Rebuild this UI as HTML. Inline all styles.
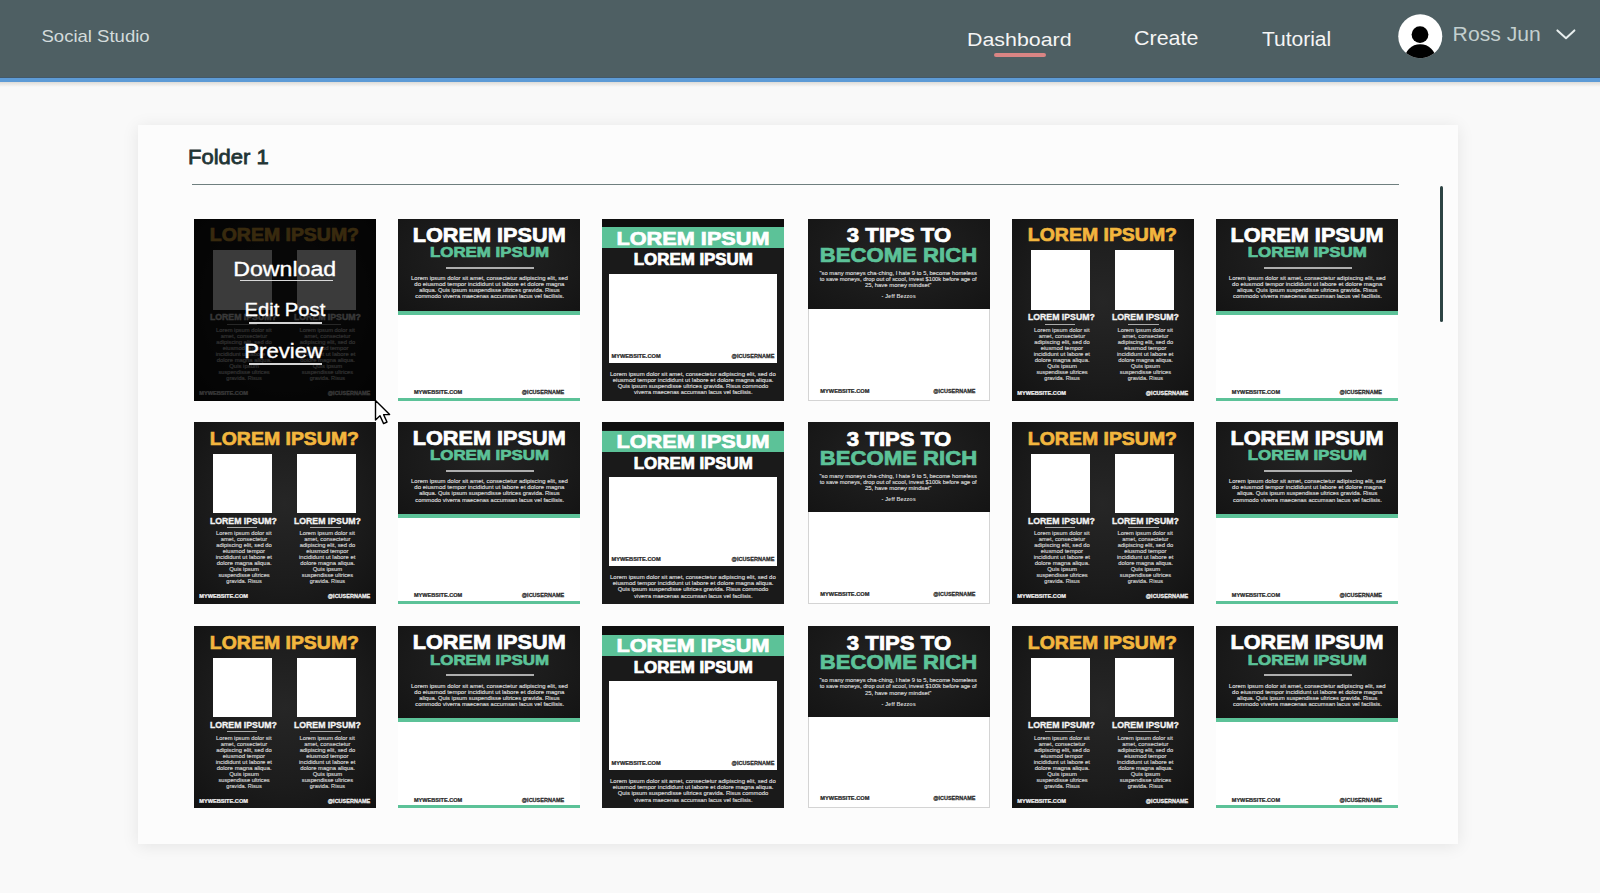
<!DOCTYPE html>
<html><head><meta charset="utf-8"><style>
html,body{margin:0;padding:0;}
body{width:1600px;height:893px;overflow:hidden;background:#f9f9f9;position:relative;font-family:"Liberation Sans",sans-serif;}
body div{position:absolute;}
.t{left:0;top:0;font-size:50px;line-height:50px;white-space:nowrap;transform-origin:0 0;}
</style></head><body>
<div style="left:0;top:0;width:1600px;height:78px;background:#4e5f63;"></div>
<div style="left:0;top:77px;width:1600px;height:1px;background:#43596a;"></div>
<div style="left:0;top:78px;width:1600px;height:4px;background:#5d9bd6;"></div>
<div style="left:0;top:82px;width:1600px;height:5px;background:linear-gradient(#dedcd8,#f9f9f9);"></div>
<div style="left:994px;top:52.8px;width:51.6px;height:4.2px;border-radius:2px;background:#da8584;"></div>
<svg style="position:absolute;left:1398px;top:14px" width="45" height="45" viewBox="0 0 45 45">
<defs><clipPath id="cc"><circle cx="22.25" cy="22.25" r="22"/></clipPath></defs>
<circle cx="22.25" cy="22.25" r="22" fill="#fff"/>
<g clip-path="url(#cc)"><circle cx="22" cy="20.6" r="8.4" fill="#000"/>
<ellipse cx="22.2" cy="45.5" rx="15.6" ry="15.3" fill="#000"/></g></svg>
<svg style="position:absolute;left:1555px;top:28px" width="22" height="13" viewBox="0 0 22 13">
<path d="M2.4 2.4 L11 10.2 L19.4 2.4" fill="none" stroke="#e8eeee" stroke-width="2" stroke-linecap="round" stroke-linejoin="round"/></svg>
<div style="left:138px;top:124.6px;width:1320px;height:719px;background:#fcfcfc;box-shadow:0 2px 16px rgba(0,0,0,0.085);"></div>
<div style="left:192px;top:183.5px;width:1207px;height:1.8px;background:#6f7f7f;"></div>
<div style="left:1439.6px;top:185.7px;width:3px;height:136.3px;border-radius:1.5px;background:#2d4444;"></div>
<div style="left:194.20px;top:218.60px;width:182.00px;height:182.00px;background:radial-gradient(ellipse at 50% 45%, #262626 0%, #1c1c1c 55%, #121212 100%);"></div>
<div class="t" style="font-weight:900;color:#f2b63e;transform:matrix(0.38911,0,0,0.37183,209.833,225.797);-webkit-text-stroke:1.883px #f2b63e;">LOREM IPSUM?</div>
<div style="left:212.80px;top:250.40px;width:59.40px;height:59.20px;background:#fff;"></div>
<div style="left:296.80px;top:250.40px;width:59.40px;height:59.20px;background:#fff;"></div>
<div class="t" style="font-weight:900;color:#f4f4f4;transform:matrix(0.17470,0,0,0.16338,209.876,313.456);-webkit-text-stroke:1.836px #f4f4f4;">LOREM IPSUM?</div>
<div class="t" style="font-weight:900;color:#f4f4f4;transform:matrix(0.17470,0,0,0.16338,293.876,313.456);-webkit-text-stroke:1.836px #f4f4f4;">LOREM IPSUM?</div>
<div style="left:226.60px;top:323.80px;width:30.00px;height:1.00px;background:#aaa;"></div>
<div style="left:310.00px;top:323.80px;width:31.00px;height:1.00px;background:#aaa;"></div>
<div class="t" style="font-weight:400;color:#d2d2d2;transform:matrix(0.11602,0,0,0.09863,216.036,328.008);-webkit-text-stroke:1.521px #d2d2d2;">Lorem ipsum dolor sit</div>
<div class="t" style="font-weight:400;color:#d2d2d2;transform:matrix(0.11653,0,0,0.11077,220.767,333.492);-webkit-text-stroke:1.354px #d2d2d2;">amet, consectetur</div>
<div class="t" style="font-weight:400;color:#d2d2d2;transform:matrix(0.11597,0,0,0.09863,216.268,340.008);-webkit-text-stroke:1.521px #d2d2d2;">adipiscing elit, sed do</div>
<div class="t" style="font-weight:400;color:#d2d2d2;transform:matrix(0.11803,0,0,0.09863,222.764,346.008);-webkit-text-stroke:1.521px #d2d2d2;">eiusmod tempor</div>
<div class="t" style="font-weight:400;color:#d2d2d2;transform:matrix(0.11854,0,0,0.09863,215.644,352.008);-webkit-text-stroke:1.521px #d2d2d2;">incididunt ut labore et</div>
<div class="t" style="font-weight:400;color:#d2d2d2;transform:matrix(0.11724,0,0,0.09863,216.766,358.008);-webkit-text-stroke:1.521px #d2d2d2;">dolore magna aliqua.</div>
<div class="t" style="font-weight:400;color:#d2d2d2;transform:matrix(0.11840,0,0,0.09863,229.263,364.008);-webkit-text-stroke:1.521px #d2d2d2;">Quis ipsum</div>
<div class="t" style="font-weight:400;color:#d2d2d2;transform:matrix(0.11391,0,0,0.09863,218.386,370.008);-webkit-text-stroke:1.521px #d2d2d2;">suspendisse ultrices</div>
<div class="t" style="font-weight:400;color:#d2d2d2;transform:matrix(0.11172,0,0,0.09863,226.277,376.008);-webkit-text-stroke:1.521px #d2d2d2;">gravida. Risus</div>
<div class="t" style="font-weight:400;color:#d2d2d2;transform:matrix(0.11602,0,0,0.09863,299.436,328.008);-webkit-text-stroke:1.521px #d2d2d2;">Lorem ipsum dolor sit</div>
<div class="t" style="font-weight:400;color:#d2d2d2;transform:matrix(0.11653,0,0,0.11077,304.167,333.492);-webkit-text-stroke:1.354px #d2d2d2;">amet, consectetur</div>
<div class="t" style="font-weight:400;color:#d2d2d2;transform:matrix(0.11597,0,0,0.09863,299.668,340.008);-webkit-text-stroke:1.521px #d2d2d2;">adipiscing elit, sed do</div>
<div class="t" style="font-weight:400;color:#d2d2d2;transform:matrix(0.11803,0,0,0.09863,306.164,346.008);-webkit-text-stroke:1.521px #d2d2d2;">eiusmod tempor</div>
<div class="t" style="font-weight:400;color:#d2d2d2;transform:matrix(0.11854,0,0,0.09863,299.044,352.008);-webkit-text-stroke:1.521px #d2d2d2;">incididunt ut labore et</div>
<div class="t" style="font-weight:400;color:#d2d2d2;transform:matrix(0.11724,0,0,0.09863,300.166,358.008);-webkit-text-stroke:1.521px #d2d2d2;">dolore magna aliqua.</div>
<div class="t" style="font-weight:400;color:#d2d2d2;transform:matrix(0.11840,0,0,0.09863,312.663,364.008);-webkit-text-stroke:1.521px #d2d2d2;">Quis ipsum</div>
<div class="t" style="font-weight:400;color:#d2d2d2;transform:matrix(0.11391,0,0,0.09863,301.786,370.008);-webkit-text-stroke:1.521px #d2d2d2;">suspendisse ultrices</div>
<div class="t" style="font-weight:400;color:#d2d2d2;transform:matrix(0.11172,0,0,0.09863,309.677,376.008);-webkit-text-stroke:1.521px #d2d2d2;">gravida. Risus</div>
<div class="t" style="font-weight:700;color:#f0f0f0;transform:matrix(0.11237,0,0,0.10857,199.263,390.686);-webkit-text-stroke:2.303px #f0f0f0;">MYWEBSITE.COM</div>
<div class="t" style="font-weight:700;color:#f0f0f0;transform:matrix(0.11037,0,0,0.10704,327.724,390.751);-webkit-text-stroke:2.336px #f0f0f0;">@ICUSERNAME</div>
<div style="left:398.20px;top:218.60px;width:182.00px;height:182.00px;background:#fff;"></div>
<div style="left:398.20px;top:218.60px;width:182.00px;height:92.00px;background:radial-gradient(ellipse at 50% 40%, #232323 0%, #1a1a1a 60%, #141414 100%);"></div>
<div style="left:398.20px;top:310.80px;width:182.00px;height:3.80px;background:#5cc298;"></div>
<div class="t" style="font-weight:900;color:#fff;transform:matrix(0.43389,0,0,0.39429,412.698,225.243);-webkit-text-stroke:1.775px #fff;">LOREM IPSUM</div>
<div class="t" style="font-weight:900;color:#5cc298;transform:matrix(0.33753,0,0,0.30000,429.987,244.650);-webkit-text-stroke:2.333px #5cc298;">LOREM IPSUM</div>
<div style="left:446.20px;top:266.90px;width:88.00px;height:1.80px;background:#aeaeae;"></div>
<div class="t" style="font-weight:400;color:#d8d8d8;transform:matrix(0.11955,0,0,0.09863,411.022,276.008);-webkit-text-stroke:1.521px #d8d8d8;">Lorem ipsum dolor sit amet, consectetur adipiscing elit, sed</div>
<div class="t" style="font-weight:400;color:#d8d8d8;transform:matrix(0.12145,0,0,0.09863,414.257,282.058);-webkit-text-stroke:1.521px #d8d8d8;">do eiusmod tempor incididunt ut labore et dolore magna</div>
<div class="t" style="font-weight:400;color:#d8d8d8;transform:matrix(0.11641,0,0,0.09863,419.267,288.108);-webkit-text-stroke:1.521px #d8d8d8;">aliqua. Quis ipsum suspendisse ultrices gravida. Risus</div>
<div class="t" style="font-weight:400;color:#d8d8d8;transform:matrix(0.11739,0,0,0.09863,415.265,294.158);-webkit-text-stroke:1.521px #d8d8d8;">commodo viverra maecenas accumsan lacus vel facilisis.</div>
<div class="t" style="font-weight:700;color:#2a2a2a;transform:matrix(0.11143,0,0,0.10857,413.966,389.686);-webkit-text-stroke:2.303px #2a2a2a;">MYWEBSITE.COM</div>
<div class="t" style="font-weight:700;color:#2a2a2a;transform:matrix(0.11037,0,0,0.10704,521.724,389.751);-webkit-text-stroke:2.336px #2a2a2a;">@ICUSERNAME</div>
<div style="left:398.20px;top:397.80px;width:182.00px;height:3.20px;background:#5cc298;"></div>
<div style="left:602.00px;top:218.60px;width:182.00px;height:182.00px;background:#1a1a1a;"></div>
<div style="left:602.00px;top:218.60px;width:182.00px;height:8.70px;background:#0f0f0f;"></div>
<div style="left:602.00px;top:227.30px;width:182.00px;height:21.20px;background:#5cc298;"></div>
<div class="t" style="font-weight:900;color:#fff;transform:matrix(0.43389,0,0,0.38286,616.498,228.729);-webkit-text-stroke:1.828px #fff;">LOREM IPSUM</div>
<div class="t" style="font-weight:900;color:#fff;transform:matrix(0.33753,0,0,0.31429,633.787,252.243);-webkit-text-stroke:2.227px #fff;">LOREM IPSUM</div>
<div style="left:609.30px;top:273.90px;width:168.00px;height:89.00px;background:#fff;"></div>
<div class="t" style="font-weight:700;color:#2a2a2a;transform:matrix(0.11354,0,0,0.10857,611.459,353.186);-webkit-text-stroke:2.303px #2a2a2a;">MYWEBSITE.COM</div>
<div class="t" style="font-weight:700;color:#2a2a2a;transform:matrix(0.11142,0,0,0.10704,731.521,353.251);-webkit-text-stroke:2.336px #2a2a2a;">@ICUSERNAME</div>
<div class="t" style="font-weight:400;color:#d8d8d8;transform:matrix(0.11996,0,0,0.09863,610.020,371.408);-webkit-text-stroke:1.521px #d8d8d8;">Lorem ipsum dolor sit amet, consectetur adipiscing elit, sed do</div>
<div class="t" style="font-weight:400;color:#d8d8d8;transform:matrix(0.12101,0,0,0.09863,612.758,377.658);-webkit-text-stroke:1.521px #d8d8d8;">eiusmod tempor incididunt ut labore et dolore magna aliqua.</div>
<div class="t" style="font-weight:400;color:#d8d8d8;transform:matrix(0.11769,0,0,0.09863,617.765,383.908);-webkit-text-stroke:1.521px #d8d8d8;">Quis ipsum suspendisse ultrices gravida. Risus commodo</div>
<div class="t" style="font-weight:400;color:#d8d8d8;transform:matrix(0.11464,0,0,0.09863,634.000,390.158);-webkit-text-stroke:1.521px #d8d8d8;">viverra maecenas accumsan lacus vel facilisis.</div>
<div style="left:807.70px;top:218.60px;width:182.00px;height:182.00px;background:#fff;border:1px solid #d4d4d4;box-sizing:border-box;"></div>
<div style="left:807.70px;top:218.60px;width:182.00px;height:90.50px;background:radial-gradient(ellipse at 50% 40%, #242424 0%, #1a1a1a 60%, #141414 100%);"></div>
<div class="t" style="font-weight:900;color:#fff;transform:matrix(0.44370,0,0,0.39714,846.856,225.721);-webkit-text-stroke:1.763px #fff;">3 TIPS TO</div>
<div class="t" style="font-weight:900;color:#5cc298;transform:matrix(0.44240,0,0,0.39714,819.873,245.121);-webkit-text-stroke:1.763px #5cc298;">BECOME RICH</div>
<div class="t" style="font-weight:400;color:#d8d8d8;transform:matrix(0.11644,0,0,0.09863,819.467,270.408);-webkit-text-stroke:1.521px #d8d8d8;">"so many moneys cha-ching, I hate 9 to 5, become homeless</div>
<div class="t" style="font-weight:400;color:#d8d8d8;transform:matrix(0.11507,0,0,0.09730,819.642,276.765);-webkit-text-stroke:1.542px #d8d8d8;">to save moneys, drop out of scool, invest $100k before age of</div>
<div class="t" style="font-weight:400;color:#d8d8d8;transform:matrix(0.11823,0,0,0.09863,864.904,283.008);-webkit-text-stroke:1.521px #d8d8d8;">25, have money mindset"</div>
<div class="t" style="font-weight:700;color:#cfcfcf;transform:matrix(0.11247,0,0,0.09863,881.531,294.008);">- Jeff Bezzos</div>
<div class="t" style="font-weight:700;color:#2a2a2a;transform:matrix(0.11354,0,0,0.10857,820.259,388.486);-webkit-text-stroke:2.303px #2a2a2a;">MYWEBSITE.COM</div>
<div class="t" style="font-weight:700;color:#2a2a2a;transform:matrix(0.10984,0,0,0.10704,933.125,388.551);-webkit-text-stroke:2.336px #2a2a2a;">@ICUSERNAME</div>
<div style="left:1012.20px;top:218.60px;width:182.00px;height:182.00px;background:radial-gradient(ellipse at 50% 45%, #262626 0%, #1c1c1c 55%, #121212 100%);"></div>
<div class="t" style="font-weight:900;color:#f2b63e;transform:matrix(0.38911,0,0,0.37183,1027.833,225.797);-webkit-text-stroke:1.883px #f2b63e;">LOREM IPSUM?</div>
<div style="left:1030.80px;top:250.40px;width:59.40px;height:59.20px;background:#fff;"></div>
<div style="left:1114.80px;top:250.40px;width:59.40px;height:59.20px;background:#fff;"></div>
<div class="t" style="font-weight:900;color:#f4f4f4;transform:matrix(0.17470,0,0,0.16338,1027.876,313.456);-webkit-text-stroke:1.836px #f4f4f4;">LOREM IPSUM?</div>
<div class="t" style="font-weight:900;color:#f4f4f4;transform:matrix(0.17470,0,0,0.16338,1111.876,313.456);-webkit-text-stroke:1.836px #f4f4f4;">LOREM IPSUM?</div>
<div style="left:1044.60px;top:323.80px;width:30.00px;height:1.00px;background:#aaa;"></div>
<div style="left:1128.00px;top:323.80px;width:31.00px;height:1.00px;background:#aaa;"></div>
<div class="t" style="font-weight:400;color:#d2d2d2;transform:matrix(0.11602,0,0,0.09863,1034.036,328.008);-webkit-text-stroke:1.521px #d2d2d2;">Lorem ipsum dolor sit</div>
<div class="t" style="font-weight:400;color:#d2d2d2;transform:matrix(0.11653,0,0,0.11077,1038.767,333.492);-webkit-text-stroke:1.354px #d2d2d2;">amet, consectetur</div>
<div class="t" style="font-weight:400;color:#d2d2d2;transform:matrix(0.11597,0,0,0.09863,1034.268,340.008);-webkit-text-stroke:1.521px #d2d2d2;">adipiscing elit, sed do</div>
<div class="t" style="font-weight:400;color:#d2d2d2;transform:matrix(0.11803,0,0,0.09863,1040.764,346.008);-webkit-text-stroke:1.521px #d2d2d2;">eiusmod tempor</div>
<div class="t" style="font-weight:400;color:#d2d2d2;transform:matrix(0.11854,0,0,0.09863,1033.644,352.008);-webkit-text-stroke:1.521px #d2d2d2;">incididunt ut labore et</div>
<div class="t" style="font-weight:400;color:#d2d2d2;transform:matrix(0.11724,0,0,0.09863,1034.766,358.008);-webkit-text-stroke:1.521px #d2d2d2;">dolore magna aliqua.</div>
<div class="t" style="font-weight:400;color:#d2d2d2;transform:matrix(0.11840,0,0,0.09863,1047.263,364.008);-webkit-text-stroke:1.521px #d2d2d2;">Quis ipsum</div>
<div class="t" style="font-weight:400;color:#d2d2d2;transform:matrix(0.11391,0,0,0.09863,1036.386,370.008);-webkit-text-stroke:1.521px #d2d2d2;">suspendisse ultrices</div>
<div class="t" style="font-weight:400;color:#d2d2d2;transform:matrix(0.11172,0,0,0.09863,1044.277,376.008);-webkit-text-stroke:1.521px #d2d2d2;">gravida. Risus</div>
<div class="t" style="font-weight:400;color:#d2d2d2;transform:matrix(0.11602,0,0,0.09863,1117.436,328.008);-webkit-text-stroke:1.521px #d2d2d2;">Lorem ipsum dolor sit</div>
<div class="t" style="font-weight:400;color:#d2d2d2;transform:matrix(0.11653,0,0,0.11077,1122.167,333.492);-webkit-text-stroke:1.354px #d2d2d2;">amet, consectetur</div>
<div class="t" style="font-weight:400;color:#d2d2d2;transform:matrix(0.11597,0,0,0.09863,1117.668,340.008);-webkit-text-stroke:1.521px #d2d2d2;">adipiscing elit, sed do</div>
<div class="t" style="font-weight:400;color:#d2d2d2;transform:matrix(0.11803,0,0,0.09863,1124.164,346.008);-webkit-text-stroke:1.521px #d2d2d2;">eiusmod tempor</div>
<div class="t" style="font-weight:400;color:#d2d2d2;transform:matrix(0.11854,0,0,0.09863,1117.044,352.008);-webkit-text-stroke:1.521px #d2d2d2;">incididunt ut labore et</div>
<div class="t" style="font-weight:400;color:#d2d2d2;transform:matrix(0.11724,0,0,0.09863,1118.166,358.008);-webkit-text-stroke:1.521px #d2d2d2;">dolore magna aliqua.</div>
<div class="t" style="font-weight:400;color:#d2d2d2;transform:matrix(0.11840,0,0,0.09863,1130.663,364.008);-webkit-text-stroke:1.521px #d2d2d2;">Quis ipsum</div>
<div class="t" style="font-weight:400;color:#d2d2d2;transform:matrix(0.11391,0,0,0.09863,1119.786,370.008);-webkit-text-stroke:1.521px #d2d2d2;">suspendisse ultrices</div>
<div class="t" style="font-weight:400;color:#d2d2d2;transform:matrix(0.11172,0,0,0.09863,1127.677,376.008);-webkit-text-stroke:1.521px #d2d2d2;">gravida. Risus</div>
<div class="t" style="font-weight:700;color:#f0f0f0;transform:matrix(0.11237,0,0,0.10857,1017.263,390.686);-webkit-text-stroke:2.303px #f0f0f0;">MYWEBSITE.COM</div>
<div class="t" style="font-weight:700;color:#f0f0f0;transform:matrix(0.11037,0,0,0.10704,1145.724,390.751);-webkit-text-stroke:2.336px #f0f0f0;">@ICUSERNAME</div>
<div style="left:1216.00px;top:218.60px;width:182.00px;height:182.00px;background:#fff;"></div>
<div style="left:1216.00px;top:218.60px;width:182.00px;height:92.00px;background:radial-gradient(ellipse at 50% 40%, #232323 0%, #1a1a1a 60%, #141414 100%);"></div>
<div style="left:1216.00px;top:310.80px;width:182.00px;height:3.80px;background:#5cc298;"></div>
<div class="t" style="font-weight:900;color:#fff;transform:matrix(0.43389,0,0,0.39429,1230.498,225.243);-webkit-text-stroke:1.775px #fff;">LOREM IPSUM</div>
<div class="t" style="font-weight:900;color:#5cc298;transform:matrix(0.33753,0,0,0.30000,1247.787,244.650);-webkit-text-stroke:2.333px #5cc298;">LOREM IPSUM</div>
<div style="left:1264.00px;top:266.90px;width:88.00px;height:1.80px;background:#aeaeae;"></div>
<div class="t" style="font-weight:400;color:#d8d8d8;transform:matrix(0.11955,0,0,0.09863,1228.822,276.008);-webkit-text-stroke:1.521px #d8d8d8;">Lorem ipsum dolor sit amet, consectetur adipiscing elit, sed</div>
<div class="t" style="font-weight:400;color:#d8d8d8;transform:matrix(0.12145,0,0,0.09863,1232.057,282.058);-webkit-text-stroke:1.521px #d8d8d8;">do eiusmod tempor incididunt ut labore et dolore magna</div>
<div class="t" style="font-weight:400;color:#d8d8d8;transform:matrix(0.11641,0,0,0.09863,1237.067,288.108);-webkit-text-stroke:1.521px #d8d8d8;">aliqua. Quis ipsum suspendisse ultrices gravida. Risus</div>
<div class="t" style="font-weight:400;color:#d8d8d8;transform:matrix(0.11739,0,0,0.09863,1233.065,294.158);-webkit-text-stroke:1.521px #d8d8d8;">commodo viverra maecenas accumsan lacus vel facilisis.</div>
<div class="t" style="font-weight:700;color:#2a2a2a;transform:matrix(0.11143,0,0,0.10857,1231.766,389.686);-webkit-text-stroke:2.303px #2a2a2a;">MYWEBSITE.COM</div>
<div class="t" style="font-weight:700;color:#2a2a2a;transform:matrix(0.11037,0,0,0.10704,1339.524,389.751);-webkit-text-stroke:2.336px #2a2a2a;">@ICUSERNAME</div>
<div style="left:1216.00px;top:397.80px;width:182.00px;height:3.20px;background:#5cc298;"></div>
<div style="left:194.20px;top:421.80px;width:182.00px;height:182.00px;background:radial-gradient(ellipse at 50% 45%, #262626 0%, #1c1c1c 55%, #121212 100%);"></div>
<div class="t" style="font-weight:900;color:#f2b63e;transform:matrix(0.38911,0,0,0.37183,209.833,428.997);-webkit-text-stroke:1.883px #f2b63e;">LOREM IPSUM?</div>
<div style="left:212.80px;top:453.60px;width:59.40px;height:59.20px;background:#fff;"></div>
<div style="left:296.80px;top:453.60px;width:59.40px;height:59.20px;background:#fff;"></div>
<div class="t" style="font-weight:900;color:#f4f4f4;transform:matrix(0.17470,0,0,0.16338,209.876,516.656);-webkit-text-stroke:1.836px #f4f4f4;">LOREM IPSUM?</div>
<div class="t" style="font-weight:900;color:#f4f4f4;transform:matrix(0.17470,0,0,0.16338,293.876,516.656);-webkit-text-stroke:1.836px #f4f4f4;">LOREM IPSUM?</div>
<div style="left:226.60px;top:527.00px;width:30.00px;height:1.00px;background:#aaa;"></div>
<div style="left:310.00px;top:527.00px;width:31.00px;height:1.00px;background:#aaa;"></div>
<div class="t" style="font-weight:400;color:#d2d2d2;transform:matrix(0.11602,0,0,0.09863,216.036,531.208);-webkit-text-stroke:1.521px #d2d2d2;">Lorem ipsum dolor sit</div>
<div class="t" style="font-weight:400;color:#d2d2d2;transform:matrix(0.11653,0,0,0.11077,220.767,536.692);-webkit-text-stroke:1.354px #d2d2d2;">amet, consectetur</div>
<div class="t" style="font-weight:400;color:#d2d2d2;transform:matrix(0.11597,0,0,0.09863,216.268,543.208);-webkit-text-stroke:1.521px #d2d2d2;">adipiscing elit, sed do</div>
<div class="t" style="font-weight:400;color:#d2d2d2;transform:matrix(0.11803,0,0,0.09863,222.764,549.208);-webkit-text-stroke:1.521px #d2d2d2;">eiusmod tempor</div>
<div class="t" style="font-weight:400;color:#d2d2d2;transform:matrix(0.11854,0,0,0.09863,215.644,555.208);-webkit-text-stroke:1.521px #d2d2d2;">incididunt ut labore et</div>
<div class="t" style="font-weight:400;color:#d2d2d2;transform:matrix(0.11724,0,0,0.09863,216.766,561.208);-webkit-text-stroke:1.521px #d2d2d2;">dolore magna aliqua.</div>
<div class="t" style="font-weight:400;color:#d2d2d2;transform:matrix(0.11840,0,0,0.09863,229.263,567.208);-webkit-text-stroke:1.521px #d2d2d2;">Quis ipsum</div>
<div class="t" style="font-weight:400;color:#d2d2d2;transform:matrix(0.11391,0,0,0.09863,218.386,573.208);-webkit-text-stroke:1.521px #d2d2d2;">suspendisse ultrices</div>
<div class="t" style="font-weight:400;color:#d2d2d2;transform:matrix(0.11172,0,0,0.09863,226.277,579.208);-webkit-text-stroke:1.521px #d2d2d2;">gravida. Risus</div>
<div class="t" style="font-weight:400;color:#d2d2d2;transform:matrix(0.11602,0,0,0.09863,299.436,531.208);-webkit-text-stroke:1.521px #d2d2d2;">Lorem ipsum dolor sit</div>
<div class="t" style="font-weight:400;color:#d2d2d2;transform:matrix(0.11653,0,0,0.11077,304.167,536.692);-webkit-text-stroke:1.354px #d2d2d2;">amet, consectetur</div>
<div class="t" style="font-weight:400;color:#d2d2d2;transform:matrix(0.11597,0,0,0.09863,299.668,543.208);-webkit-text-stroke:1.521px #d2d2d2;">adipiscing elit, sed do</div>
<div class="t" style="font-weight:400;color:#d2d2d2;transform:matrix(0.11803,0,0,0.09863,306.164,549.208);-webkit-text-stroke:1.521px #d2d2d2;">eiusmod tempor</div>
<div class="t" style="font-weight:400;color:#d2d2d2;transform:matrix(0.11854,0,0,0.09863,299.044,555.208);-webkit-text-stroke:1.521px #d2d2d2;">incididunt ut labore et</div>
<div class="t" style="font-weight:400;color:#d2d2d2;transform:matrix(0.11724,0,0,0.09863,300.166,561.208);-webkit-text-stroke:1.521px #d2d2d2;">dolore magna aliqua.</div>
<div class="t" style="font-weight:400;color:#d2d2d2;transform:matrix(0.11840,0,0,0.09863,312.663,567.208);-webkit-text-stroke:1.521px #d2d2d2;">Quis ipsum</div>
<div class="t" style="font-weight:400;color:#d2d2d2;transform:matrix(0.11391,0,0,0.09863,301.786,573.208);-webkit-text-stroke:1.521px #d2d2d2;">suspendisse ultrices</div>
<div class="t" style="font-weight:400;color:#d2d2d2;transform:matrix(0.11172,0,0,0.09863,309.677,579.208);-webkit-text-stroke:1.521px #d2d2d2;">gravida. Risus</div>
<div class="t" style="font-weight:700;color:#f0f0f0;transform:matrix(0.11237,0,0,0.10857,199.263,593.886);-webkit-text-stroke:2.303px #f0f0f0;">MYWEBSITE.COM</div>
<div class="t" style="font-weight:700;color:#f0f0f0;transform:matrix(0.11037,0,0,0.10704,327.724,593.951);-webkit-text-stroke:2.336px #f0f0f0;">@ICUSERNAME</div>
<div style="left:398.20px;top:421.80px;width:182.00px;height:182.00px;background:#fff;"></div>
<div style="left:398.20px;top:421.80px;width:182.00px;height:92.00px;background:radial-gradient(ellipse at 50% 40%, #232323 0%, #1a1a1a 60%, #141414 100%);"></div>
<div style="left:398.20px;top:514.00px;width:182.00px;height:3.80px;background:#5cc298;"></div>
<div class="t" style="font-weight:900;color:#fff;transform:matrix(0.43389,0,0,0.39429,412.698,428.443);-webkit-text-stroke:1.775px #fff;">LOREM IPSUM</div>
<div class="t" style="font-weight:900;color:#5cc298;transform:matrix(0.33753,0,0,0.30000,429.987,447.850);-webkit-text-stroke:2.333px #5cc298;">LOREM IPSUM</div>
<div style="left:446.20px;top:470.10px;width:88.00px;height:1.80px;background:#aeaeae;"></div>
<div class="t" style="font-weight:400;color:#d8d8d8;transform:matrix(0.11955,0,0,0.09863,411.022,479.208);-webkit-text-stroke:1.521px #d8d8d8;">Lorem ipsum dolor sit amet, consectetur adipiscing elit, sed</div>
<div class="t" style="font-weight:400;color:#d8d8d8;transform:matrix(0.12145,0,0,0.09863,414.257,485.258);-webkit-text-stroke:1.521px #d8d8d8;">do eiusmod tempor incididunt ut labore et dolore magna</div>
<div class="t" style="font-weight:400;color:#d8d8d8;transform:matrix(0.11641,0,0,0.09863,419.267,491.308);-webkit-text-stroke:1.521px #d8d8d8;">aliqua. Quis ipsum suspendisse ultrices gravida. Risus</div>
<div class="t" style="font-weight:400;color:#d8d8d8;transform:matrix(0.11739,0,0,0.09863,415.265,497.358);-webkit-text-stroke:1.521px #d8d8d8;">commodo viverra maecenas accumsan lacus vel facilisis.</div>
<div class="t" style="font-weight:700;color:#2a2a2a;transform:matrix(0.11143,0,0,0.10857,413.966,592.886);-webkit-text-stroke:2.303px #2a2a2a;">MYWEBSITE.COM</div>
<div class="t" style="font-weight:700;color:#2a2a2a;transform:matrix(0.11037,0,0,0.10704,521.724,592.951);-webkit-text-stroke:2.336px #2a2a2a;">@ICUSERNAME</div>
<div style="left:398.20px;top:601.00px;width:182.00px;height:3.20px;background:#5cc298;"></div>
<div style="left:602.00px;top:421.80px;width:182.00px;height:182.00px;background:#1a1a1a;"></div>
<div style="left:602.00px;top:421.80px;width:182.00px;height:8.70px;background:#0f0f0f;"></div>
<div style="left:602.00px;top:430.50px;width:182.00px;height:21.20px;background:#5cc298;"></div>
<div class="t" style="font-weight:900;color:#fff;transform:matrix(0.43389,0,0,0.38286,616.498,431.929);-webkit-text-stroke:1.828px #fff;">LOREM IPSUM</div>
<div class="t" style="font-weight:900;color:#fff;transform:matrix(0.33753,0,0,0.31429,633.787,455.443);-webkit-text-stroke:2.227px #fff;">LOREM IPSUM</div>
<div style="left:609.30px;top:477.10px;width:168.00px;height:89.00px;background:#fff;"></div>
<div class="t" style="font-weight:700;color:#2a2a2a;transform:matrix(0.11354,0,0,0.10857,611.459,556.386);-webkit-text-stroke:2.303px #2a2a2a;">MYWEBSITE.COM</div>
<div class="t" style="font-weight:700;color:#2a2a2a;transform:matrix(0.11142,0,0,0.10704,731.521,556.451);-webkit-text-stroke:2.336px #2a2a2a;">@ICUSERNAME</div>
<div class="t" style="font-weight:400;color:#d8d8d8;transform:matrix(0.11996,0,0,0.09863,610.020,574.608);-webkit-text-stroke:1.521px #d8d8d8;">Lorem ipsum dolor sit amet, consectetur adipiscing elit, sed do</div>
<div class="t" style="font-weight:400;color:#d8d8d8;transform:matrix(0.12101,0,0,0.09863,612.758,580.858);-webkit-text-stroke:1.521px #d8d8d8;">eiusmod tempor incididunt ut labore et dolore magna aliqua.</div>
<div class="t" style="font-weight:400;color:#d8d8d8;transform:matrix(0.11769,0,0,0.09863,617.765,587.108);-webkit-text-stroke:1.521px #d8d8d8;">Quis ipsum suspendisse ultrices gravida. Risus commodo</div>
<div class="t" style="font-weight:400;color:#d8d8d8;transform:matrix(0.11464,0,0,0.09863,634.000,593.358);-webkit-text-stroke:1.521px #d8d8d8;">viverra maecenas accumsan lacus vel facilisis.</div>
<div style="left:807.70px;top:421.80px;width:182.00px;height:182.00px;background:#fff;border:1px solid #d4d4d4;box-sizing:border-box;"></div>
<div style="left:807.70px;top:421.80px;width:182.00px;height:90.50px;background:radial-gradient(ellipse at 50% 40%, #242424 0%, #1a1a1a 60%, #141414 100%);"></div>
<div class="t" style="font-weight:900;color:#fff;transform:matrix(0.44370,0,0,0.39714,846.856,428.921);-webkit-text-stroke:1.763px #fff;">3 TIPS TO</div>
<div class="t" style="font-weight:900;color:#5cc298;transform:matrix(0.44240,0,0,0.39714,819.873,448.321);-webkit-text-stroke:1.763px #5cc298;">BECOME RICH</div>
<div class="t" style="font-weight:400;color:#d8d8d8;transform:matrix(0.11644,0,0,0.09863,819.467,473.608);-webkit-text-stroke:1.521px #d8d8d8;">"so many moneys cha-ching, I hate 9 to 5, become homeless</div>
<div class="t" style="font-weight:400;color:#d8d8d8;transform:matrix(0.11507,0,0,0.09730,819.642,479.965);-webkit-text-stroke:1.542px #d8d8d8;">to save moneys, drop out of scool, invest $100k before age of</div>
<div class="t" style="font-weight:400;color:#d8d8d8;transform:matrix(0.11823,0,0,0.09863,864.904,486.208);-webkit-text-stroke:1.521px #d8d8d8;">25, have money mindset"</div>
<div class="t" style="font-weight:700;color:#cfcfcf;transform:matrix(0.11247,0,0,0.09863,881.531,497.208);">- Jeff Bezzos</div>
<div class="t" style="font-weight:700;color:#2a2a2a;transform:matrix(0.11354,0,0,0.10857,820.259,591.686);-webkit-text-stroke:2.303px #2a2a2a;">MYWEBSITE.COM</div>
<div class="t" style="font-weight:700;color:#2a2a2a;transform:matrix(0.10984,0,0,0.10704,933.125,591.751);-webkit-text-stroke:2.336px #2a2a2a;">@ICUSERNAME</div>
<div style="left:1012.20px;top:421.80px;width:182.00px;height:182.00px;background:radial-gradient(ellipse at 50% 45%, #262626 0%, #1c1c1c 55%, #121212 100%);"></div>
<div class="t" style="font-weight:900;color:#f2b63e;transform:matrix(0.38911,0,0,0.37183,1027.833,428.997);-webkit-text-stroke:1.883px #f2b63e;">LOREM IPSUM?</div>
<div style="left:1030.80px;top:453.60px;width:59.40px;height:59.20px;background:#fff;"></div>
<div style="left:1114.80px;top:453.60px;width:59.40px;height:59.20px;background:#fff;"></div>
<div class="t" style="font-weight:900;color:#f4f4f4;transform:matrix(0.17470,0,0,0.16338,1027.876,516.656);-webkit-text-stroke:1.836px #f4f4f4;">LOREM IPSUM?</div>
<div class="t" style="font-weight:900;color:#f4f4f4;transform:matrix(0.17470,0,0,0.16338,1111.876,516.656);-webkit-text-stroke:1.836px #f4f4f4;">LOREM IPSUM?</div>
<div style="left:1044.60px;top:527.00px;width:30.00px;height:1.00px;background:#aaa;"></div>
<div style="left:1128.00px;top:527.00px;width:31.00px;height:1.00px;background:#aaa;"></div>
<div class="t" style="font-weight:400;color:#d2d2d2;transform:matrix(0.11602,0,0,0.09863,1034.036,531.208);-webkit-text-stroke:1.521px #d2d2d2;">Lorem ipsum dolor sit</div>
<div class="t" style="font-weight:400;color:#d2d2d2;transform:matrix(0.11653,0,0,0.11077,1038.767,536.692);-webkit-text-stroke:1.354px #d2d2d2;">amet, consectetur</div>
<div class="t" style="font-weight:400;color:#d2d2d2;transform:matrix(0.11597,0,0,0.09863,1034.268,543.208);-webkit-text-stroke:1.521px #d2d2d2;">adipiscing elit, sed do</div>
<div class="t" style="font-weight:400;color:#d2d2d2;transform:matrix(0.11803,0,0,0.09863,1040.764,549.208);-webkit-text-stroke:1.521px #d2d2d2;">eiusmod tempor</div>
<div class="t" style="font-weight:400;color:#d2d2d2;transform:matrix(0.11854,0,0,0.09863,1033.644,555.208);-webkit-text-stroke:1.521px #d2d2d2;">incididunt ut labore et</div>
<div class="t" style="font-weight:400;color:#d2d2d2;transform:matrix(0.11724,0,0,0.09863,1034.766,561.208);-webkit-text-stroke:1.521px #d2d2d2;">dolore magna aliqua.</div>
<div class="t" style="font-weight:400;color:#d2d2d2;transform:matrix(0.11840,0,0,0.09863,1047.263,567.208);-webkit-text-stroke:1.521px #d2d2d2;">Quis ipsum</div>
<div class="t" style="font-weight:400;color:#d2d2d2;transform:matrix(0.11391,0,0,0.09863,1036.386,573.208);-webkit-text-stroke:1.521px #d2d2d2;">suspendisse ultrices</div>
<div class="t" style="font-weight:400;color:#d2d2d2;transform:matrix(0.11172,0,0,0.09863,1044.277,579.208);-webkit-text-stroke:1.521px #d2d2d2;">gravida. Risus</div>
<div class="t" style="font-weight:400;color:#d2d2d2;transform:matrix(0.11602,0,0,0.09863,1117.436,531.208);-webkit-text-stroke:1.521px #d2d2d2;">Lorem ipsum dolor sit</div>
<div class="t" style="font-weight:400;color:#d2d2d2;transform:matrix(0.11653,0,0,0.11077,1122.167,536.692);-webkit-text-stroke:1.354px #d2d2d2;">amet, consectetur</div>
<div class="t" style="font-weight:400;color:#d2d2d2;transform:matrix(0.11597,0,0,0.09863,1117.668,543.208);-webkit-text-stroke:1.521px #d2d2d2;">adipiscing elit, sed do</div>
<div class="t" style="font-weight:400;color:#d2d2d2;transform:matrix(0.11803,0,0,0.09863,1124.164,549.208);-webkit-text-stroke:1.521px #d2d2d2;">eiusmod tempor</div>
<div class="t" style="font-weight:400;color:#d2d2d2;transform:matrix(0.11854,0,0,0.09863,1117.044,555.208);-webkit-text-stroke:1.521px #d2d2d2;">incididunt ut labore et</div>
<div class="t" style="font-weight:400;color:#d2d2d2;transform:matrix(0.11724,0,0,0.09863,1118.166,561.208);-webkit-text-stroke:1.521px #d2d2d2;">dolore magna aliqua.</div>
<div class="t" style="font-weight:400;color:#d2d2d2;transform:matrix(0.11840,0,0,0.09863,1130.663,567.208);-webkit-text-stroke:1.521px #d2d2d2;">Quis ipsum</div>
<div class="t" style="font-weight:400;color:#d2d2d2;transform:matrix(0.11391,0,0,0.09863,1119.786,573.208);-webkit-text-stroke:1.521px #d2d2d2;">suspendisse ultrices</div>
<div class="t" style="font-weight:400;color:#d2d2d2;transform:matrix(0.11172,0,0,0.09863,1127.677,579.208);-webkit-text-stroke:1.521px #d2d2d2;">gravida. Risus</div>
<div class="t" style="font-weight:700;color:#f0f0f0;transform:matrix(0.11237,0,0,0.10857,1017.263,593.886);-webkit-text-stroke:2.303px #f0f0f0;">MYWEBSITE.COM</div>
<div class="t" style="font-weight:700;color:#f0f0f0;transform:matrix(0.11037,0,0,0.10704,1145.724,593.951);-webkit-text-stroke:2.336px #f0f0f0;">@ICUSERNAME</div>
<div style="left:1216.00px;top:421.80px;width:182.00px;height:182.00px;background:#fff;"></div>
<div style="left:1216.00px;top:421.80px;width:182.00px;height:92.00px;background:radial-gradient(ellipse at 50% 40%, #232323 0%, #1a1a1a 60%, #141414 100%);"></div>
<div style="left:1216.00px;top:514.00px;width:182.00px;height:3.80px;background:#5cc298;"></div>
<div class="t" style="font-weight:900;color:#fff;transform:matrix(0.43389,0,0,0.39429,1230.498,428.443);-webkit-text-stroke:1.775px #fff;">LOREM IPSUM</div>
<div class="t" style="font-weight:900;color:#5cc298;transform:matrix(0.33753,0,0,0.30000,1247.787,447.850);-webkit-text-stroke:2.333px #5cc298;">LOREM IPSUM</div>
<div style="left:1264.00px;top:470.10px;width:88.00px;height:1.80px;background:#aeaeae;"></div>
<div class="t" style="font-weight:400;color:#d8d8d8;transform:matrix(0.11955,0,0,0.09863,1228.822,479.208);-webkit-text-stroke:1.521px #d8d8d8;">Lorem ipsum dolor sit amet, consectetur adipiscing elit, sed</div>
<div class="t" style="font-weight:400;color:#d8d8d8;transform:matrix(0.12145,0,0,0.09863,1232.057,485.258);-webkit-text-stroke:1.521px #d8d8d8;">do eiusmod tempor incididunt ut labore et dolore magna</div>
<div class="t" style="font-weight:400;color:#d8d8d8;transform:matrix(0.11641,0,0,0.09863,1237.067,491.308);-webkit-text-stroke:1.521px #d8d8d8;">aliqua. Quis ipsum suspendisse ultrices gravida. Risus</div>
<div class="t" style="font-weight:400;color:#d8d8d8;transform:matrix(0.11739,0,0,0.09863,1233.065,497.358);-webkit-text-stroke:1.521px #d8d8d8;">commodo viverra maecenas accumsan lacus vel facilisis.</div>
<div class="t" style="font-weight:700;color:#2a2a2a;transform:matrix(0.11143,0,0,0.10857,1231.766,592.886);-webkit-text-stroke:2.303px #2a2a2a;">MYWEBSITE.COM</div>
<div class="t" style="font-weight:700;color:#2a2a2a;transform:matrix(0.11037,0,0,0.10704,1339.524,592.951);-webkit-text-stroke:2.336px #2a2a2a;">@ICUSERNAME</div>
<div style="left:1216.00px;top:601.00px;width:182.00px;height:3.20px;background:#5cc298;"></div>
<div style="left:194.20px;top:626.00px;width:182.00px;height:182.00px;background:radial-gradient(ellipse at 50% 45%, #262626 0%, #1c1c1c 55%, #121212 100%);"></div>
<div class="t" style="font-weight:900;color:#f2b63e;transform:matrix(0.38911,0,0,0.37183,209.833,633.197);-webkit-text-stroke:1.883px #f2b63e;">LOREM IPSUM?</div>
<div style="left:212.80px;top:657.80px;width:59.40px;height:59.20px;background:#fff;"></div>
<div style="left:296.80px;top:657.80px;width:59.40px;height:59.20px;background:#fff;"></div>
<div class="t" style="font-weight:900;color:#f4f4f4;transform:matrix(0.17470,0,0,0.16338,209.876,720.856);-webkit-text-stroke:1.836px #f4f4f4;">LOREM IPSUM?</div>
<div class="t" style="font-weight:900;color:#f4f4f4;transform:matrix(0.17470,0,0,0.16338,293.876,720.856);-webkit-text-stroke:1.836px #f4f4f4;">LOREM IPSUM?</div>
<div style="left:226.60px;top:731.20px;width:30.00px;height:1.00px;background:#aaa;"></div>
<div style="left:310.00px;top:731.20px;width:31.00px;height:1.00px;background:#aaa;"></div>
<div class="t" style="font-weight:400;color:#d2d2d2;transform:matrix(0.11602,0,0,0.09863,216.036,735.408);-webkit-text-stroke:1.521px #d2d2d2;">Lorem ipsum dolor sit</div>
<div class="t" style="font-weight:400;color:#d2d2d2;transform:matrix(0.11653,0,0,0.11077,220.767,740.892);-webkit-text-stroke:1.354px #d2d2d2;">amet, consectetur</div>
<div class="t" style="font-weight:400;color:#d2d2d2;transform:matrix(0.11597,0,0,0.09863,216.268,747.408);-webkit-text-stroke:1.521px #d2d2d2;">adipiscing elit, sed do</div>
<div class="t" style="font-weight:400;color:#d2d2d2;transform:matrix(0.11803,0,0,0.09863,222.764,753.408);-webkit-text-stroke:1.521px #d2d2d2;">eiusmod tempor</div>
<div class="t" style="font-weight:400;color:#d2d2d2;transform:matrix(0.11854,0,0,0.09863,215.644,759.408);-webkit-text-stroke:1.521px #d2d2d2;">incididunt ut labore et</div>
<div class="t" style="font-weight:400;color:#d2d2d2;transform:matrix(0.11724,0,0,0.09863,216.766,765.408);-webkit-text-stroke:1.521px #d2d2d2;">dolore magna aliqua.</div>
<div class="t" style="font-weight:400;color:#d2d2d2;transform:matrix(0.11840,0,0,0.09863,229.263,771.408);-webkit-text-stroke:1.521px #d2d2d2;">Quis ipsum</div>
<div class="t" style="font-weight:400;color:#d2d2d2;transform:matrix(0.11391,0,0,0.09863,218.386,777.408);-webkit-text-stroke:1.521px #d2d2d2;">suspendisse ultrices</div>
<div class="t" style="font-weight:400;color:#d2d2d2;transform:matrix(0.11172,0,0,0.09863,226.277,783.408);-webkit-text-stroke:1.521px #d2d2d2;">gravida. Risus</div>
<div class="t" style="font-weight:400;color:#d2d2d2;transform:matrix(0.11602,0,0,0.09863,299.436,735.408);-webkit-text-stroke:1.521px #d2d2d2;">Lorem ipsum dolor sit</div>
<div class="t" style="font-weight:400;color:#d2d2d2;transform:matrix(0.11653,0,0,0.11077,304.167,740.892);-webkit-text-stroke:1.354px #d2d2d2;">amet, consectetur</div>
<div class="t" style="font-weight:400;color:#d2d2d2;transform:matrix(0.11597,0,0,0.09863,299.668,747.408);-webkit-text-stroke:1.521px #d2d2d2;">adipiscing elit, sed do</div>
<div class="t" style="font-weight:400;color:#d2d2d2;transform:matrix(0.11803,0,0,0.09863,306.164,753.408);-webkit-text-stroke:1.521px #d2d2d2;">eiusmod tempor</div>
<div class="t" style="font-weight:400;color:#d2d2d2;transform:matrix(0.11854,0,0,0.09863,299.044,759.408);-webkit-text-stroke:1.521px #d2d2d2;">incididunt ut labore et</div>
<div class="t" style="font-weight:400;color:#d2d2d2;transform:matrix(0.11724,0,0,0.09863,300.166,765.408);-webkit-text-stroke:1.521px #d2d2d2;">dolore magna aliqua.</div>
<div class="t" style="font-weight:400;color:#d2d2d2;transform:matrix(0.11840,0,0,0.09863,312.663,771.408);-webkit-text-stroke:1.521px #d2d2d2;">Quis ipsum</div>
<div class="t" style="font-weight:400;color:#d2d2d2;transform:matrix(0.11391,0,0,0.09863,301.786,777.408);-webkit-text-stroke:1.521px #d2d2d2;">suspendisse ultrices</div>
<div class="t" style="font-weight:400;color:#d2d2d2;transform:matrix(0.11172,0,0,0.09863,309.677,783.408);-webkit-text-stroke:1.521px #d2d2d2;">gravida. Risus</div>
<div class="t" style="font-weight:700;color:#f0f0f0;transform:matrix(0.11237,0,0,0.10857,199.263,798.086);-webkit-text-stroke:2.303px #f0f0f0;">MYWEBSITE.COM</div>
<div class="t" style="font-weight:700;color:#f0f0f0;transform:matrix(0.11037,0,0,0.10704,327.724,798.151);-webkit-text-stroke:2.336px #f0f0f0;">@ICUSERNAME</div>
<div style="left:398.20px;top:626.00px;width:182.00px;height:182.00px;background:#fff;"></div>
<div style="left:398.20px;top:626.00px;width:182.00px;height:92.00px;background:radial-gradient(ellipse at 50% 40%, #232323 0%, #1a1a1a 60%, #141414 100%);"></div>
<div style="left:398.20px;top:718.20px;width:182.00px;height:3.80px;background:#5cc298;"></div>
<div class="t" style="font-weight:900;color:#fff;transform:matrix(0.43389,0,0,0.39429,412.698,632.643);-webkit-text-stroke:1.775px #fff;">LOREM IPSUM</div>
<div class="t" style="font-weight:900;color:#5cc298;transform:matrix(0.33753,0,0,0.30000,429.987,652.050);-webkit-text-stroke:2.333px #5cc298;">LOREM IPSUM</div>
<div style="left:446.20px;top:674.30px;width:88.00px;height:1.80px;background:#aeaeae;"></div>
<div class="t" style="font-weight:400;color:#d8d8d8;transform:matrix(0.11955,0,0,0.09863,411.022,683.408);-webkit-text-stroke:1.521px #d8d8d8;">Lorem ipsum dolor sit amet, consectetur adipiscing elit, sed</div>
<div class="t" style="font-weight:400;color:#d8d8d8;transform:matrix(0.12145,0,0,0.09863,414.257,689.458);-webkit-text-stroke:1.521px #d8d8d8;">do eiusmod tempor incididunt ut labore et dolore magna</div>
<div class="t" style="font-weight:400;color:#d8d8d8;transform:matrix(0.11641,0,0,0.09863,419.267,695.508);-webkit-text-stroke:1.521px #d8d8d8;">aliqua. Quis ipsum suspendisse ultrices gravida. Risus</div>
<div class="t" style="font-weight:400;color:#d8d8d8;transform:matrix(0.11739,0,0,0.09863,415.265,701.558);-webkit-text-stroke:1.521px #d8d8d8;">commodo viverra maecenas accumsan lacus vel facilisis.</div>
<div class="t" style="font-weight:700;color:#2a2a2a;transform:matrix(0.11143,0,0,0.10857,413.966,797.086);-webkit-text-stroke:2.303px #2a2a2a;">MYWEBSITE.COM</div>
<div class="t" style="font-weight:700;color:#2a2a2a;transform:matrix(0.11037,0,0,0.10704,521.724,797.151);-webkit-text-stroke:2.336px #2a2a2a;">@ICUSERNAME</div>
<div style="left:398.20px;top:805.20px;width:182.00px;height:3.20px;background:#5cc298;"></div>
<div style="left:602.00px;top:626.00px;width:182.00px;height:182.00px;background:#1a1a1a;"></div>
<div style="left:602.00px;top:626.00px;width:182.00px;height:8.70px;background:#0f0f0f;"></div>
<div style="left:602.00px;top:634.70px;width:182.00px;height:21.20px;background:#5cc298;"></div>
<div class="t" style="font-weight:900;color:#fff;transform:matrix(0.43389,0,0,0.38286,616.498,636.129);-webkit-text-stroke:1.828px #fff;">LOREM IPSUM</div>
<div class="t" style="font-weight:900;color:#fff;transform:matrix(0.33753,0,0,0.31429,633.787,659.643);-webkit-text-stroke:2.227px #fff;">LOREM IPSUM</div>
<div style="left:609.30px;top:681.30px;width:168.00px;height:89.00px;background:#fff;"></div>
<div class="t" style="font-weight:700;color:#2a2a2a;transform:matrix(0.11354,0,0,0.10857,611.459,760.586);-webkit-text-stroke:2.303px #2a2a2a;">MYWEBSITE.COM</div>
<div class="t" style="font-weight:700;color:#2a2a2a;transform:matrix(0.11142,0,0,0.10704,731.521,760.651);-webkit-text-stroke:2.336px #2a2a2a;">@ICUSERNAME</div>
<div class="t" style="font-weight:400;color:#d8d8d8;transform:matrix(0.11996,0,0,0.09863,610.020,778.808);-webkit-text-stroke:1.521px #d8d8d8;">Lorem ipsum dolor sit amet, consectetur adipiscing elit, sed do</div>
<div class="t" style="font-weight:400;color:#d8d8d8;transform:matrix(0.12101,0,0,0.09863,612.758,785.058);-webkit-text-stroke:1.521px #d8d8d8;">eiusmod tempor incididunt ut labore et dolore magna aliqua.</div>
<div class="t" style="font-weight:400;color:#d8d8d8;transform:matrix(0.11769,0,0,0.09863,617.765,791.308);-webkit-text-stroke:1.521px #d8d8d8;">Quis ipsum suspendisse ultrices gravida. Risus commodo</div>
<div class="t" style="font-weight:400;color:#d8d8d8;transform:matrix(0.11464,0,0,0.09863,634.000,797.558);-webkit-text-stroke:1.521px #d8d8d8;">viverra maecenas accumsan lacus vel facilisis.</div>
<div style="left:807.70px;top:626.00px;width:182.00px;height:182.00px;background:#fff;border:1px solid #d4d4d4;box-sizing:border-box;"></div>
<div style="left:807.70px;top:626.00px;width:182.00px;height:90.50px;background:radial-gradient(ellipse at 50% 40%, #242424 0%, #1a1a1a 60%, #141414 100%);"></div>
<div class="t" style="font-weight:900;color:#fff;transform:matrix(0.44370,0,0,0.39714,846.856,633.121);-webkit-text-stroke:1.763px #fff;">3 TIPS TO</div>
<div class="t" style="font-weight:900;color:#5cc298;transform:matrix(0.44240,0,0,0.39714,819.873,652.521);-webkit-text-stroke:1.763px #5cc298;">BECOME RICH</div>
<div class="t" style="font-weight:400;color:#d8d8d8;transform:matrix(0.11644,0,0,0.09863,819.467,677.808);-webkit-text-stroke:1.521px #d8d8d8;">"so many moneys cha-ching, I hate 9 to 5, become homeless</div>
<div class="t" style="font-weight:400;color:#d8d8d8;transform:matrix(0.11507,0,0,0.09730,819.642,684.165);-webkit-text-stroke:1.542px #d8d8d8;">to save moneys, drop out of scool, invest $100k before age of</div>
<div class="t" style="font-weight:400;color:#d8d8d8;transform:matrix(0.11823,0,0,0.09863,864.904,690.408);-webkit-text-stroke:1.521px #d8d8d8;">25, have money mindset"</div>
<div class="t" style="font-weight:700;color:#cfcfcf;transform:matrix(0.11247,0,0,0.09863,881.531,701.408);">- Jeff Bezzos</div>
<div class="t" style="font-weight:700;color:#2a2a2a;transform:matrix(0.11354,0,0,0.10857,820.259,795.886);-webkit-text-stroke:2.303px #2a2a2a;">MYWEBSITE.COM</div>
<div class="t" style="font-weight:700;color:#2a2a2a;transform:matrix(0.10984,0,0,0.10704,933.125,795.951);-webkit-text-stroke:2.336px #2a2a2a;">@ICUSERNAME</div>
<div style="left:1012.20px;top:626.00px;width:182.00px;height:182.00px;background:radial-gradient(ellipse at 50% 45%, #262626 0%, #1c1c1c 55%, #121212 100%);"></div>
<div class="t" style="font-weight:900;color:#f2b63e;transform:matrix(0.38911,0,0,0.37183,1027.833,633.197);-webkit-text-stroke:1.883px #f2b63e;">LOREM IPSUM?</div>
<div style="left:1030.80px;top:657.80px;width:59.40px;height:59.20px;background:#fff;"></div>
<div style="left:1114.80px;top:657.80px;width:59.40px;height:59.20px;background:#fff;"></div>
<div class="t" style="font-weight:900;color:#f4f4f4;transform:matrix(0.17470,0,0,0.16338,1027.876,720.856);-webkit-text-stroke:1.836px #f4f4f4;">LOREM IPSUM?</div>
<div class="t" style="font-weight:900;color:#f4f4f4;transform:matrix(0.17470,0,0,0.16338,1111.876,720.856);-webkit-text-stroke:1.836px #f4f4f4;">LOREM IPSUM?</div>
<div style="left:1044.60px;top:731.20px;width:30.00px;height:1.00px;background:#aaa;"></div>
<div style="left:1128.00px;top:731.20px;width:31.00px;height:1.00px;background:#aaa;"></div>
<div class="t" style="font-weight:400;color:#d2d2d2;transform:matrix(0.11602,0,0,0.09863,1034.036,735.408);-webkit-text-stroke:1.521px #d2d2d2;">Lorem ipsum dolor sit</div>
<div class="t" style="font-weight:400;color:#d2d2d2;transform:matrix(0.11653,0,0,0.11077,1038.767,740.892);-webkit-text-stroke:1.354px #d2d2d2;">amet, consectetur</div>
<div class="t" style="font-weight:400;color:#d2d2d2;transform:matrix(0.11597,0,0,0.09863,1034.268,747.408);-webkit-text-stroke:1.521px #d2d2d2;">adipiscing elit, sed do</div>
<div class="t" style="font-weight:400;color:#d2d2d2;transform:matrix(0.11803,0,0,0.09863,1040.764,753.408);-webkit-text-stroke:1.521px #d2d2d2;">eiusmod tempor</div>
<div class="t" style="font-weight:400;color:#d2d2d2;transform:matrix(0.11854,0,0,0.09863,1033.644,759.408);-webkit-text-stroke:1.521px #d2d2d2;">incididunt ut labore et</div>
<div class="t" style="font-weight:400;color:#d2d2d2;transform:matrix(0.11724,0,0,0.09863,1034.766,765.408);-webkit-text-stroke:1.521px #d2d2d2;">dolore magna aliqua.</div>
<div class="t" style="font-weight:400;color:#d2d2d2;transform:matrix(0.11840,0,0,0.09863,1047.263,771.408);-webkit-text-stroke:1.521px #d2d2d2;">Quis ipsum</div>
<div class="t" style="font-weight:400;color:#d2d2d2;transform:matrix(0.11391,0,0,0.09863,1036.386,777.408);-webkit-text-stroke:1.521px #d2d2d2;">suspendisse ultrices</div>
<div class="t" style="font-weight:400;color:#d2d2d2;transform:matrix(0.11172,0,0,0.09863,1044.277,783.408);-webkit-text-stroke:1.521px #d2d2d2;">gravida. Risus</div>
<div class="t" style="font-weight:400;color:#d2d2d2;transform:matrix(0.11602,0,0,0.09863,1117.436,735.408);-webkit-text-stroke:1.521px #d2d2d2;">Lorem ipsum dolor sit</div>
<div class="t" style="font-weight:400;color:#d2d2d2;transform:matrix(0.11653,0,0,0.11077,1122.167,740.892);-webkit-text-stroke:1.354px #d2d2d2;">amet, consectetur</div>
<div class="t" style="font-weight:400;color:#d2d2d2;transform:matrix(0.11597,0,0,0.09863,1117.668,747.408);-webkit-text-stroke:1.521px #d2d2d2;">adipiscing elit, sed do</div>
<div class="t" style="font-weight:400;color:#d2d2d2;transform:matrix(0.11803,0,0,0.09863,1124.164,753.408);-webkit-text-stroke:1.521px #d2d2d2;">eiusmod tempor</div>
<div class="t" style="font-weight:400;color:#d2d2d2;transform:matrix(0.11854,0,0,0.09863,1117.044,759.408);-webkit-text-stroke:1.521px #d2d2d2;">incididunt ut labore et</div>
<div class="t" style="font-weight:400;color:#d2d2d2;transform:matrix(0.11724,0,0,0.09863,1118.166,765.408);-webkit-text-stroke:1.521px #d2d2d2;">dolore magna aliqua.</div>
<div class="t" style="font-weight:400;color:#d2d2d2;transform:matrix(0.11840,0,0,0.09863,1130.663,771.408);-webkit-text-stroke:1.521px #d2d2d2;">Quis ipsum</div>
<div class="t" style="font-weight:400;color:#d2d2d2;transform:matrix(0.11391,0,0,0.09863,1119.786,777.408);-webkit-text-stroke:1.521px #d2d2d2;">suspendisse ultrices</div>
<div class="t" style="font-weight:400;color:#d2d2d2;transform:matrix(0.11172,0,0,0.09863,1127.677,783.408);-webkit-text-stroke:1.521px #d2d2d2;">gravida. Risus</div>
<div class="t" style="font-weight:700;color:#f0f0f0;transform:matrix(0.11237,0,0,0.10857,1017.263,798.086);-webkit-text-stroke:2.303px #f0f0f0;">MYWEBSITE.COM</div>
<div class="t" style="font-weight:700;color:#f0f0f0;transform:matrix(0.11037,0,0,0.10704,1145.724,798.151);-webkit-text-stroke:2.336px #f0f0f0;">@ICUSERNAME</div>
<div style="left:1216.00px;top:626.00px;width:182.00px;height:182.00px;background:#fff;"></div>
<div style="left:1216.00px;top:626.00px;width:182.00px;height:92.00px;background:radial-gradient(ellipse at 50% 40%, #232323 0%, #1a1a1a 60%, #141414 100%);"></div>
<div style="left:1216.00px;top:718.20px;width:182.00px;height:3.80px;background:#5cc298;"></div>
<div class="t" style="font-weight:900;color:#fff;transform:matrix(0.43389,0,0,0.39429,1230.498,632.643);-webkit-text-stroke:1.775px #fff;">LOREM IPSUM</div>
<div class="t" style="font-weight:900;color:#5cc298;transform:matrix(0.33753,0,0,0.30000,1247.787,652.050);-webkit-text-stroke:2.333px #5cc298;">LOREM IPSUM</div>
<div style="left:1264.00px;top:674.30px;width:88.00px;height:1.80px;background:#aeaeae;"></div>
<div class="t" style="font-weight:400;color:#d8d8d8;transform:matrix(0.11955,0,0,0.09863,1228.822,683.408);-webkit-text-stroke:1.521px #d8d8d8;">Lorem ipsum dolor sit amet, consectetur adipiscing elit, sed</div>
<div class="t" style="font-weight:400;color:#d8d8d8;transform:matrix(0.12145,0,0,0.09863,1232.057,689.458);-webkit-text-stroke:1.521px #d8d8d8;">do eiusmod tempor incididunt ut labore et dolore magna</div>
<div class="t" style="font-weight:400;color:#d8d8d8;transform:matrix(0.11641,0,0,0.09863,1237.067,695.508);-webkit-text-stroke:1.521px #d8d8d8;">aliqua. Quis ipsum suspendisse ultrices gravida. Risus</div>
<div class="t" style="font-weight:400;color:#d8d8d8;transform:matrix(0.11739,0,0,0.09863,1233.065,701.558);-webkit-text-stroke:1.521px #d8d8d8;">commodo viverra maecenas accumsan lacus vel facilisis.</div>
<div class="t" style="font-weight:700;color:#2a2a2a;transform:matrix(0.11143,0,0,0.10857,1231.766,797.086);-webkit-text-stroke:2.303px #2a2a2a;">MYWEBSITE.COM</div>
<div class="t" style="font-weight:700;color:#2a2a2a;transform:matrix(0.11037,0,0,0.10704,1339.524,797.151);-webkit-text-stroke:2.336px #2a2a2a;">@ICUSERNAME</div>
<div style="left:1216.00px;top:805.20px;width:182.00px;height:3.20px;background:#5cc298;"></div>
<div style="left:194.20px;top:218.60px;width:182.00px;height:182.00px;background:rgba(0,0,0,0.77);"></div>
<div class="t" style="font-weight:400;color:#fff;transform:matrix(0.46299,0,0,0.40822,233.248,258.451);-webkit-text-stroke:0.857px #fff;">Download</div>
<div style="left:240.00px;top:279.80px;width:93.00px;height:1.40px;background:#d8d8d8;"></div>
<div class="t" style="font-weight:400;color:#fff;transform:matrix(0.40468,0,0,0.37808,244.381,299.932);-webkit-text-stroke:0.926px #fff;">Edit Post</div>
<div style="left:249.00px;top:321.80px;width:73.00px;height:1.80px;background:#d4d4d4;"></div>
<div class="t" style="font-weight:400;color:#fff;transform:matrix(0.44311,0,0,0.39178,244.228,341.349);-webkit-text-stroke:0.893px #fff;">Preview</div>
<div style="left:249.00px;top:363.00px;width:73.00px;height:1.80px;background:#d4d4d4;"></div>
<div class="t" style="font-weight:400;color:#d3dbdb;transform:matrix(0.37078,0,0,0.34795,41.458,27.512);">Social Studio</div>
<div class="t" style="font-weight:400;color:#f5f5f5;transform:matrix(0.42768,0,0,0.37260,966.989,29.964);">Dashboard</div>
<div class="t" style="font-weight:400;color:#f5f5f5;transform:matrix(0.42877,0,0,0.39143,1134.028,28.564);">Create</div>
<div class="t" style="font-weight:400;color:#f5f5f5;transform:matrix(0.42050,0,0,0.38630,1261.879,29.482);">Tutorial</div>
<div class="t" style="font-weight:400;color:#c3cfcf;transform:matrix(0.42308,0,0,0.39429,1452.608,24.743);">Ross Jun</div>
<div class="t" style="font-weight:400;color:#1f3434;transform:matrix(0.44067,0,0,0.41096,187.987,146.434);-webkit-text-stroke:1.825px #1f3434;">Folder 1</div>
<svg style="position:absolute;left:374px;top:399px" width="20" height="28" viewBox="0 0 20 28">
<path d="M1.5 1.5 L1.5 21 L6 16.8 L9.6 24.6 L13 23 L9.6 15.6 L15.6 15.6 Z" fill="#fff" stroke="#000" stroke-width="1.4" stroke-linejoin="round"/></svg>
</body></html>
